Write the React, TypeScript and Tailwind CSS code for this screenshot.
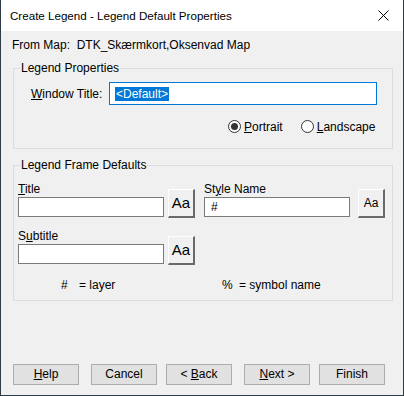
import React from "react";

function Radio({ checked }: { checked: boolean }) {
	return (
		<span className="flex h-[13px] w-[13px] items-center justify-center rounded-full border border-[#333333] bg-white">
			{checked && <span className="h-[7px] w-[7px] rounded-full bg-[#333333]" />}
		</span>
	);
}

function FontButton({ small }: { small?: boolean }) {
	return (
		<button
			type="button"
			className={
				small
					? "mt-[8px] flex h-[29px] w-[27px] shrink-0 items-center justify-center border-t border-l border-b-2 border-r-2 border-t-white border-l-white border-b-[#696969] border-r-[#696969] bg-[#f0f0f0] text-[12px] text-black"
					: "mt-[8px] flex h-[29px] w-[27px] shrink-0 items-center justify-center border-t border-l border-b-2 border-r-2 border-t-white border-l-white border-b-[#696969] border-r-[#696969] bg-[#f0f0f0] text-[15px] text-black"
			}
		>
			Aa
		</button>
	);
}

function DlgButton({ children, className }: { children: React.ReactNode; className?: string }) {
	return (
		<button
			type="button"
			className={`h-[21px] w-[66px] border border-[#adadad] bg-[#e1e1e1] text-[12px] leading-[19px] text-black ${className ?? ""}`}
		>
			{children}
		</button>
	);
}

export default function App() {
	return (
		<div className="flex h-[396px] w-[404px] flex-col border-x border-b border-[#2e3d45] bg-[#f0f0f0] font-['Liberation_Sans',sans-serif] text-[12px] text-black">
			{/* Title bar */}
			<div className="flex h-[31px] shrink-0 items-center justify-between bg-white pl-[9px] pr-[12px]">
				<span className="text-[11.6px]">Create Legend - Legend Default Properties</span>
				<svg width="11" height="11" viewBox="0 0 11 11" className="mr-[2px]">
					<path d="M0.5 0.5 L10.5 10.5 M10.5 0.5 L0.5 10.5" stroke="#000" strokeWidth="1" />
				</svg>
			</div>

			<div className="mt-[6px] h-[16px] pl-[11px] leading-[16px]">
				From Map:&nbsp; DTK_Skærmkort,Oksenvad Map
			</div>

			{/* Legend Properties */}
			<div className="relative ml-[12px] mt-[15px] h-[81px] w-[380px] border border-[#dcdcdc]">
				<span className="absolute -top-[9px] left-[6px] bg-[#f0f0f0] px-[1px] leading-[16px]">
					Legend Properties
				</span>
				<div className="mt-[13px] flex items-center pl-[17px]">
					<span className="w-[78px]">
						<u>W</u>indow Title:
					</span>
					<div className="flex h-[23px] w-[268px] items-center border border-[#0078d7] bg-white pl-[5px]">
						<span className="bg-[#0078d7] px-[1px] leading-[14px] text-white">&lt;Default&gt;</span>
					</div>
				</div>
				<div className="mt-[15px] flex h-[13px] items-center pl-[214px] leading-[14px]">
					<Radio checked />
					<span className="ml-[3px]">
						<u>P</u>ortrait
					</span>
					<span className="ml-[18px]">
						<Radio checked={false} />
					</span>
					<span className="ml-[3px]">
						<u>L</u>andscape
					</span>
				</div>
			</div>

			{/* Legend Frame Defaults */}
			<div className="relative ml-[12px] mt-[16px] h-[136px] w-[380px] border border-[#dcdcdc]">
				<span className="absolute -top-[9px] left-[6px] bg-[#f0f0f0] px-[1px] leading-[16px]">
					Legend Frame Defaults
				</span>
				<div className="mt-[15px] flex items-start pl-[4px]">
					<div className="w-[146px]">
						<div className="h-[16px] leading-[16px]">
							<u>T</u>itle
						</div>
						<div className="h-[20px] border border-[#7a7a7a] bg-white" />
					</div>
					<div className="ml-[4px]">
						<FontButton />
					</div>
					<div className="ml-[9px] w-[146px]">
						<div className="h-[16px] leading-[16px]">
							St<u>y</u>le Name
						</div>
						<div className="flex h-[20px] items-center border border-[#7a7a7a] bg-white pl-[6px]">#</div>
					</div>
					<div className="ml-[8px]">
						<FontButton small />
					</div>
				</div>
				<div className="mt-[10px] flex items-start pl-[4px]">
					<div className="w-[146px]">
						<div className="h-[16px] leading-[16px]">
							S<u>u</u>btitle
						</div>
						<div className="h-[20px] border border-[#7a7a7a] bg-white" />
					</div>
					<div className="ml-[4px]">
						<FontButton />
					</div>
				</div>
				<div className="mt-[12px] flex h-[16px] items-center pl-[4px] leading-[16px]">
					<span className="ml-[43px] w-[18px]">#</span>
					<span className="w-[143px]">= layer</span>
					<span className="w-[17px]">%</span>
					<span>= symbol name</span>
				</div>
			</div>

			{/* Buttons */}
			<div className="mt-auto mb-[10px] flex pl-[12px]">
				<DlgButton>
					<u>H</u>elp
				</DlgButton>
				<DlgButton className="ml-[12px]">Cancel</DlgButton>
				<DlgButton className="ml-[9px]">
					&lt; <u>B</u>ack
				</DlgButton>
				<DlgButton className="ml-[12px]">
					<u>N</u>ext &gt;
				</DlgButton>
				<DlgButton className="ml-[9px]">Finish</DlgButton>
			</div>
		</div>
	);
}
